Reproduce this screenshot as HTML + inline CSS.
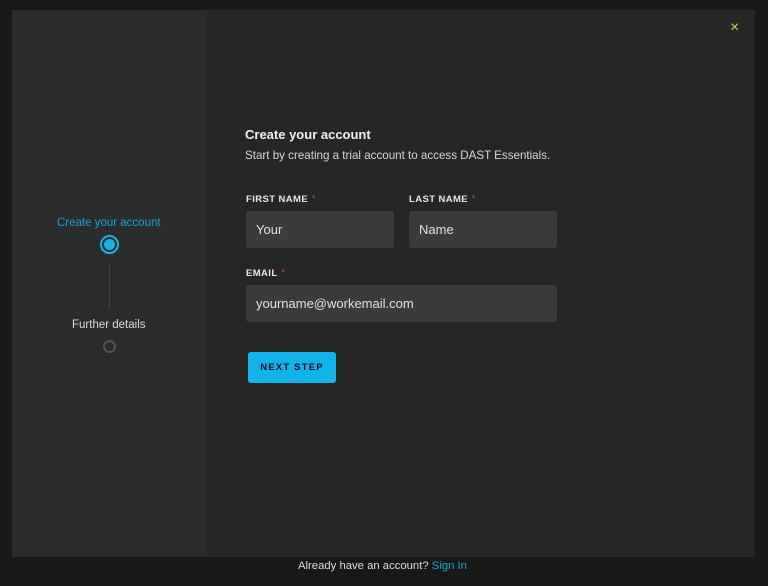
<!DOCTYPE html>
<html><head><style>
*{margin:0;padding:0;box-sizing:border-box}
body{width:768px;height:586px;background:#171818;font-family:"Liberation Sans",sans-serif;position:relative;overflow:hidden}
.modal{position:absolute;left:12px;top:10px;width:743px;height:547px;background:#252626}
.left{position:absolute;left:12px;top:10px;width:195px;height:547px;background:#2b2c2e}
.a{position:absolute;white-space:nowrap}
.inp{position:absolute;background:#3a3b3b;border-radius:3px;color:#e2e2e2;font-size:13px;padding-left:10px;line-height:37px;height:37px}
.lbl{position:absolute;font-size:9.5px;font-weight:bold;color:#e8e8e8;letter-spacing:.4px}
.lbl span{color:#c0363a;font-size:8px;margin-left:4px;vertical-align:top}
</style></head><body>
<div class="modal"></div>
<div class="left"></div>
<div class="a" style="left:730px;top:19px;color:#c8d23c;font-size:16px">×</div>
<div class="a" style="left:57px;top:217px;color:#1aa3d4;font-size:11.5px">Create your account</div>
<div class="a" style="left:100px;top:235px;width:19px;height:19px;border:2px solid #19b2e6;border-radius:50%;padding:2px"><div style="width:11px;height:11px;border-radius:50%;background:#19b2e6"></div></div>
<div class="a" style="left:109px;top:263px;width:1px;height:46px;background:#444"></div>
<div class="a" style="left:72px;top:319px;color:#ddd;font-size:11.5px">Further details</div>
<div class="a" style="left:103px;top:340px;width:13px;height:13px;border:2px solid #555;border-radius:50%"></div>
<div class="a" style="left:245px;top:127px;color:#f0f0f0;font-size:13px;font-weight:bold">Create your account</div>
<div class="a" style="left:245px;top:149px;color:#d8d8d8;font-size:11.6px">Start by creating a trial account to access DAST Essentials.</div>
<div class="lbl" style="left:246px;top:194px">FIRST NAME<span>*</span></div>
<div class="lbl" style="left:409px;top:194px">LAST NAME<span>*</span></div>
<div class="inp" style="left:246px;top:211px;width:148px">Your</div>
<div class="inp" style="left:409px;top:211px;width:148px">Name</div>
<div class="lbl" style="left:246px;top:268px">EMAIL<span>*</span></div>
<div class="inp" style="left:246px;top:285px;width:311px">yourname@workemail.com</div>
<div class="a" style="left:248px;top:352px;width:88px;height:31px;background:#12b3e8;border-radius:3px;color:#112;font-size:9.5px;font-weight:bold;letter-spacing:1.2px;text-align:center;line-height:31px">NEXT STEP</div>
<div class="a" style="left:298px;top:560px;color:#ddd;font-size:11.3px">Already have an account? <span style="color:#1aa3d4">Sign In</span></div>
</body></html>
